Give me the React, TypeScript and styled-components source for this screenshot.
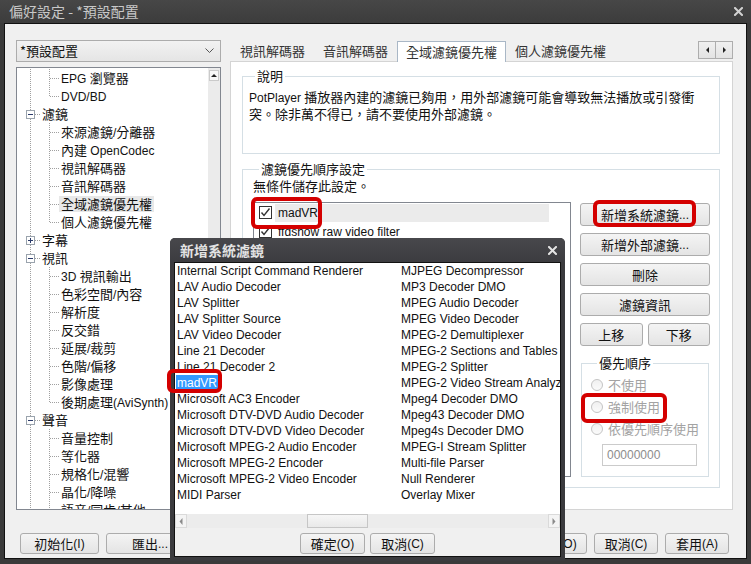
import React from 'react';
import styled, { createGlobalStyle, css } from 'styled-components';

const FONT = `"Noto Sans CJK TC", "Noto Sans", sans-serif`;
const LATIN = `"Liberation Sans", Arial, "Noto Sans CJK TC", sans-serif`;

const GlobalStyle = createGlobalStyle`
  * { box-sizing: border-box; }
  html, body { margin: 0; padding: 0; background: #3a3a3a; }
  body { font-family: ${FONT}; font-size: 13px; color: #000; }
`;

const Latin = styled.span`
  font-family: ${LATIN};
  font-size: 12px;
`;

const mix = (s: string) =>
  s
    .split(/([\x20-\x7e]+)/)
    .filter((p) => p.length > 0)
    .map((p, i) => (/^[\x20-\x7e]+$/.test(p) ? <Latin key={i}>{p}</Latin> : <React.Fragment key={i}>{p}</React.Fragment>));

const Window = styled.div`
  position: relative;
  width: 751px;
  height: 564px;
  display: flex;
  flex-direction: column;
  padding: 0 4px 5px;
  background: #3a3a3a;
  overflow: hidden;
`;

const TitleBar = styled.div`
  height: 23px;
  margin: 0 -4px;
  padding: 0 8px 0 9px;
  display: flex;
  align-items: center;
  justify-content: space-between;
  background: linear-gradient(#474747, #3c3c3c);
  color: #c8c8c8;
  font-size: 14px;
  line-height: 23px;
  white-space: nowrap;
`;

const Client = styled.div`
  flex: 1;
  min-height: 0;
  display: flex;
  flex-direction: column;
  background: #f0f0f0;
  border: 1px solid #111;
`;

const Main = styled.div`
  height: 486px;
  display: grid;
  grid-template-columns: 205px 503px;
  column-gap: 9px;
  padding: 16px 0 0 11px;
`;

const LeftCol = styled.div`
  display: flex;
  flex-direction: column;
  gap: 5px;
  min-height: 0;
`;

const Combo = styled.div`
  height: 22px;
  flex: none;
  display: flex;
  align-items: center;
  justify-content: space-between;
  padding: 0 6px 0 3px;
  border: 1px solid #acacac;
  background: linear-gradient(#f2f2f2, #e5e5e5);
  line-height: 20px;
  color: #111;
`;

const Tree = styled.div`
  flex: 1;
  min-height: 0;
  display: flex;
  border: 1px solid #828790;
  background: #fff;
`;

const TreeBody = styled.div`
  flex: 1;
  overflow: hidden;
  padding: 1px 0 0 4px;
`;

const TreeRow = styled.div`
  height: 18px;
  display: flex;
  align-items: center;
`;

const TreeLabel = styled.span<{ $sel?: boolean }>`
  padding: 0 2px;
  line-height: 16px;
  white-space: nowrap;
  color: #111;
  ${(p) => p.$sel && css`background: #e8e8e8;`}
`;

const GuideSvg = styled.svg`
  flex: none;
  display: block;
  shape-rendering: crispEdges;
`;

const VScroll = styled.div`
  width: 12px;
  flex: none;
  background: #ebebeb;
  display: flex;
  flex-direction: column;
  align-items: center;
  padding-top: 2px;
`;

const ScrollBtn = styled.div`
  width: 10px;
  height: 11px;
  border: 1px solid #cacaca;
  background: #f7f7f7;
  display: flex;
  align-items: center;
  justify-content: center;
`;

const RightCol = styled.div`
  display: flex;
  flex-direction: column;
  min-height: 0;
`;

const TabStrip = styled.div`
  height: 21px;
  flex: none;
  display: flex;
  align-items: stretch;
  padding-left: 1px;
`;

const Tab = styled.div<{ $active?: boolean }>`
  padding: 0 9px;
  display: flex;
  align-items: center;
  color: #333;
  line-height: 16px;
  white-space: nowrap;
  ${(p) =>
    p.$active &&
    css`
      position: relative;
      z-index: 1;
      margin-top: 1px;
      height: 21px;
      padding: 0 8px;
      background: #fff;
      border: 1px solid #a9b7c6;
      border-bottom: none;
    `}
`;

const TabArrows = styled.div`
  margin-left: auto;
  margin-top: 1px;
  height: 18px;
  display: flex;
`;

const ArrowBtn = styled.div`
  width: 18px;
  height: 18px;
  border: 1px solid #adadad;
  background: linear-gradient(#f0f0f0, #e3e3e3);
  display: flex;
  align-items: center;
  justify-content: center;
  & + & {
    margin-left: -1px;
  }
`;

const Panel = styled.div`
  flex: 1;
  min-height: 0;
  border: 1px solid #d4d4d4;
  background: #fff;
  padding: 6px 12px 0 11px;
  display: flex;
  flex-direction: column;
  gap: 7px;
`;

const Group = styled.fieldset<{ $h: number }>`
  margin: 0;
  padding: 0;
  min-width: 0;
  height: ${(p) => p.$h}px;
  border: 1px solid #d5dfe5;
`;

const Legend = styled.legend`
  margin-left: 6px;
  padding: 0 2px;
  line-height: 16px;
  font-size: 13px;
  color: #111;
`;

const DescGroup = styled(Group)`
  padding: 5px 6px 0;
`;

const DescText = styled.div`
  line-height: 15px;
  color: #111;
  white-space: nowrap;
`;

const OrderGroup = styled(Group)`
  padding: 1px 0 0 10px;
`;

const Note = styled.div`
  line-height: 16px;
  color: #111;
`;

const ContentRow = styled.div`
  margin-top: 8px;
  display: grid;
  grid-template-columns: 318px 130px;
  column-gap: 9px;
  align-items: start;
`;

const FilterList = styled.div`
  height: 275px;
  border: 1px solid #828790;
  background: #fff;
  padding: 1px 0 0 5px;
`;

const FilterRow = styled.div`
  position: relative;
  height: 19px;
  display: flex;
  align-items: flex-start;
`;

const CheckBox = styled.span`
  flex: none;
  margin-top: 2px;
  width: 13px;
  height: 13px;
  border: 1px solid #333;
  background: #fff;
  display: flex;
  align-items: center;
  justify-content: center;
`;

const FilterLabel = styled.span<{ $sel?: boolean }>`
  margin-left: 3px;
  width: 274px;
  height: 18px;
  padding-left: 3px;
  font-family: ${LATIN};
  font-size: 12px;
  line-height: 18px;
  white-space: nowrap;
  color: #111;
  ${(p) => p.$sel && css`background: #ebebeb;`}
`;

const ButtonCol = styled.div`
  margin-top: 1px;
  display: flex;
  flex-direction: column;
  gap: 7px;
`;

const PushButton = styled.div<{ $w?: number; $h?: number }>`
  position: relative;
  flex: none;
  height: ${(p) => p.$h ?? 23}px;
  ${(p) => p.$w && css`width: ${p.$w}px;`}
  display: flex;
  align-items: center;
  justify-content: center;
  border: 1px solid #acacac;
  border-radius: 3px;
  background: linear-gradient(#f4f4f4, #e4e4e4);
  line-height: 16px;
  color: #111;
  white-space: nowrap;
`;

const MoveRow = styled.div`
  display: grid;
  grid-template-columns: 1fr 1fr;
  column-gap: 5px;
`;

const PriorityGroup = styled(Group)`
  margin: 2px 1px 0;
  padding: 3px 0 0 9px;
`;

const RadioRow = styled.div`
  position: relative;
  height: 22px;
  display: flex;
  align-items: center;
  gap: 5px;
  color: #a3a3a3;
  line-height: 16px;
  white-space: nowrap;
`;

const RadioDot = styled.span`
  flex: none;
  width: 12px;
  height: 12px;
  border-radius: 50%;
  border: 1px solid #c4c4c4;
  background: linear-gradient(#f0f0f0, #fbfbfb);
`;

const Edit = styled.div`
  margin: 4px 0 0 11px;
  width: 95px;
  height: 22px;
  border: 1px solid #cbcbcb;
  background: #fff;
  color: #8c8c8c;
  padding-left: 4px;
  font-family: ${LATIN};
  font-size: 12px;
  line-height: 20px;
`;

const BottomBar = styled.div`
  height: 48px;
  display: flex;
  align-items: flex-end;
  gap: 7px;
  padding: 0 17px 4px 15px;
`;

const Spacer = styled.div`
  flex: 1;
`;

const Ring = styled.span<{ $l: number; $t: number; $w: number; $h: number }>`
  position: absolute;
  left: ${(p) => p.$l}px;
  top: ${(p) => p.$t}px;
  width: ${(p) => p.$w}px;
  height: ${(p) => p.$h}px;
  border: 4px solid #d40000;
  border-radius: 6px;
  pointer-events: none;
  z-index: 2;
`;

/* ---------- dialog ---------- */

const Dialog = styled.div`
  position: absolute;
  left: 170px;
  top: 238px;
  width: 395px;
  height: 323px;
  display: flex;
  flex-direction: column;
  padding: 0 4px 4px;
  background: #3b3b3e;
  border-radius: 5px 5px 0 0;
  z-index: 5;
`;

const DialogTitle = styled.div`
  height: 24px;
  margin: 0 -4px;
  padding: 0 8px 0 10px;
  display: flex;
  align-items: center;
  justify-content: space-between;
  border-radius: 5px 5px 0 0;
  background: linear-gradient(#48484c, #3c3c40);
  color: #e2e2e2;
  font-size: 14px;
  font-weight: 700;
  line-height: 24px;
`;

const DialogClient = styled.div`
  flex: 1;
  min-height: 0;
  display: flex;
  flex-direction: column;
  border: 1px solid #111;
  background: #f0f0f0;
`;

const PickList = styled.div`
  height: 251px;
  flex: none;
  background: #fff;
  display: grid;
  grid-auto-flow: column;
  grid-template-rows: repeat(15, 16px);
  grid-template-columns: 224px 159px;
  align-content: start;
  padding-left: 2px;
  font-family: ${LATIN};
  font-size: 12px;
`;

const PickItem = styled.div<{ $open?: boolean }>`
  line-height: 16px;
  white-space: nowrap;
  overflow: ${(p) => (p.$open ? 'visible' : 'hidden')};
  color: #111;
`;

const PickSel = styled.span`
  position: relative;
  display: inline-block;
  margin-left: -1px;
  padding: 0 1px;
  background: #3399ff;
  color: #fff;
`;

const HScroll = styled.div`
  height: 14px;
  flex: none;
  display: flex;
  align-items: stretch;
  background: #ececec;
`;

const HArrow = styled.div`
  width: 12px;
  display: flex;
  align-items: center;
  justify-content: center;
  background: #f4f4f4;
  border: 1px solid #dadada;
  &:last-child {
    margin-left: auto;
  }
`;

const HThumb = styled.div`
  margin-left: 120px;
  width: 61px;
  border: 1px solid #c6c6c6;
  background: linear-gradient(#f6f6f6, #e9e9e9);
`;

const DialogButtons = styled.div`
  flex: 1;
  display: flex;
  justify-content: center;
  gap: 5px;
  padding-top: 5px;
`;

/* ---------- drawings ---------- */

const CloseGlyph = ({ color }: { color: string }) => (
  <svg width="9" height="9" viewBox="0 0 9 9" style={{ display: 'block' }}>
    <path d="M1 1L8 8M8 1L1 8" stroke={color} strokeWidth="2" strokeLinecap="square" />
  </svg>
);

const Chevron = () => (
  <svg width="9" height="6" viewBox="0 0 9 6" style={{ display: 'block' }}>
    <polyline points="0.5,0.5 4.5,4.5 8.5,0.5" fill="none" stroke="#555" strokeWidth="1" />
  </svg>
);

const Tri = ({ dir }: { dir: 'up' | 'left' | 'right' }) => {
  const pts = dir === 'up' ? '0,4 3,1 6,4' : dir === 'left' ? '4,0 1,3 4,6' : '1,0 4,3 1,6';
  const size = dir === 'up' ? { w: 6, h: 5 } : { w: 5, h: 7 };
  return (
    <svg width={size.w} height={size.h} viewBox={`0 0 ${size.w} ${size.h}`} style={{ display: 'block' }}>
      <polygon points={pts} fill="#222" />
    </svg>
  );
};

const SmallTri = ({ dir }: { dir: 'left' | 'right' }) => (
  <svg width="4" height="7" viewBox="0 0 4 7" style={{ display: 'block' }}>
    <polygon points={dir === 'left' ? '3.5,0 0.5,3.5 3.5,7' : '0.5,0 3.5,3.5 0.5,7'} fill="#8a8a8a" />
  </svg>
);

const CheckMark = () => (
  <svg width="11" height="11" viewBox="0 0 11 11" style={{ display: 'block' }}>
    <polyline points="1.5,5.5 4,8.5 9.5,1.5" fill="none" stroke="#333" strokeWidth="1.4" />
  </svg>
);

type GuideProps = { vert: 'full' | 'top'; horiz?: boolean; box?: 'plus' | 'minus' };

const Guide = ({ vert, horiz, box }: GuideProps) => (
  <GuideSvg width="19" height="18" viewBox="0 0 19 18">
    <line x1="9.5" y1="0" x2="9.5" y2={vert === 'full' ? 18 : 10} stroke="#a0a0a0" strokeDasharray="1 1" />
    {horiz && <line x1={box ? 14 : 10} y1="9.5" x2="19" y2="9.5" stroke="#a0a0a0" strokeDasharray="1 1" />}
    {box && (
      <>
        <rect x="5.5" y="5.5" width="8" height="8" fill="#fff" stroke="#9aa3ad" />
        <line x1="7" y1="9.5" x2="12" y2="9.5" stroke="#2a3a6a" />
        {box === 'plus' && <line x1="9.5" y1="7" x2="9.5" y2="12" stroke="#2a3a6a" />}
      </>
    )}
  </GuideSvg>
);

/* ---------- data ---------- */

type TreeNode = { label: string; level: 1 | 2; box?: 'plus' | 'minus'; last?: boolean; selected?: boolean };

const treeRows: TreeNode[] = [
  { label: 'EPG 瀏覽器', level: 2 },
  { label: 'DVD/BD', level: 2, last: true },
  { label: '濾鏡', level: 1, box: 'minus' },
  { label: '來源濾鏡/分離器', level: 2 },
  { label: '內建 OpenCodec', level: 2 },
  { label: '視訊解碼器', level: 2 },
  { label: '音訊解碼器', level: 2 },
  { label: '全域濾鏡優先權', level: 2, selected: true },
  { label: '個人濾鏡優先權', level: 2, last: true },
  { label: '字幕', level: 1, box: 'plus' },
  { label: '視訊', level: 1, box: 'minus' },
  { label: '3D 視訊輸出', level: 2 },
  { label: '色彩空間/內容', level: 2 },
  { label: '解析度', level: 2 },
  { label: '反交錯', level: 2 },
  { label: '延展/裁剪', level: 2 },
  { label: '色階/偏移', level: 2 },
  { label: '影像處理', level: 2 },
  { label: '後期處理(AviSynth)', level: 2, last: true },
  { label: '聲音', level: 1, box: 'minus' },
  { label: '音量控制', level: 2 },
  { label: '等化器', level: 2 },
  { label: '規格化/混響', level: 2 },
  { label: '晶化/降噪', level: 2 },
  { label: '語音/同步/其他', level: 2 },
];

const pickCol1 = [
  'Internal Script Command Renderer',
  'LAV Audio Decoder',
  'LAV Splitter',
  'LAV Splitter Source',
  'LAV Video Decoder',
  'Line 21 Decoder',
  'Line 21 Decoder 2',
  'madVR',
  'Microsoft AC3 Encoder',
  'Microsoft DTV-DVD Audio Decoder',
  'Microsoft DTV-DVD Video Decoder',
  'Microsoft MPEG-2 Audio Encoder',
  'Microsoft MPEG-2 Encoder',
  'Microsoft MPEG-2 Video Encoder',
  'MIDI Parser',
];

const pickCol2 = [
  'MJPEG Decompressor',
  'MP3 Decoder DMO',
  'MPEG Audio Decoder',
  'MPEG Video Decoder',
  'MPEG-2 Demultiplexer',
  'MPEG-2 Sections and Tables',
  'MPEG-2 Splitter',
  'MPEG-2 Video Stream Analyzer',
  'Mpeg4 Decoder DMO',
  'Mpeg43 Decoder DMO',
  'Mpeg4s Decoder DMO',
  'MPEG-I Stream Splitter',
  'Multi-file Parser',
  'Null Renderer',
  'Overlay Mixer',
];

export default function App() {
  return (
    <>
      <GlobalStyle />
      <Window>
        <TitleBar>
          <span>偏好設定 - *預設配置</span>
          <CloseGlyph color="#d2d2d2" />
        </TitleBar>
        <Client>
          <Main>
            <LeftCol>
              <Combo>
                <span>*預設配置</span>
                <Chevron />
              </Combo>
              <Tree>
                <TreeBody>
                  {treeRows.map((n, i) => (
                    <TreeRow key={i}>
                      {n.level === 1 ? (
                        <Guide vert="full" horiz box={n.box} />
                      ) : (
                        <>
                          <Guide vert="full" />
                          <Guide vert={n.last ? 'top' : 'full'} horiz />
                        </>
                      )}
                      <TreeLabel $sel={n.selected}>{mix(n.label)}</TreeLabel>
                    </TreeRow>
                  ))}
                </TreeBody>
                <VScroll>
                  <ScrollBtn>
                    <Tri dir="up" />
                  </ScrollBtn>
                </VScroll>
              </Tree>
            </LeftCol>
            <RightCol>
              <TabStrip>
                <Tab>視訊解碼器</Tab>
                <Tab>音訊解碼器</Tab>
                <Tab $active>全域濾鏡優先權</Tab>
                <Tab>個人濾鏡優先權</Tab>
                <TabArrows>
                  <ArrowBtn>
                    <Tri dir="left" />
                  </ArrowBtn>
                  <ArrowBtn>
                    <Tri dir="right" />
                  </ArrowBtn>
                </TabArrows>
              </TabStrip>
              <Panel>
                <DescGroup $h={86}>
                  <Legend>說明</Legend>
                  <DescText>
                    {mix('PotPlayer 播放器內建的濾鏡已夠用，用外部濾鏡可能會導致無法播放或引發衝')}
                    <br />
                    突。除非萬不得已，請不要使用外部濾鏡。
                  </DescText>
                </DescGroup>
                <OrderGroup $h={327}>
                  <Legend>濾鏡優先順序設定</Legend>
                  <Note>無條件儲存此設定。</Note>
                  <ContentRow>
                    <FilterList>
                      <FilterRow>
                        <CheckBox>
                          <CheckMark />
                        </CheckBox>
                        <FilterLabel $sel>madVR</FilterLabel>
                        <Ring $l={-8} $t={-7} $w={71} $h={32} />
                      </FilterRow>
                      <FilterRow>
                        <CheckBox>
                          <CheckMark />
                        </CheckBox>
                        <FilterLabel>ffdshow raw video filter</FilterLabel>
                      </FilterRow>
                      <FilterRow>
                        <CheckBox>
                          <CheckMark />
                        </CheckBox>
                        <FilterLabel>LAV Video Decoder</FilterLabel>
                      </FilterRow>
                    </FilterList>
                    <ButtonCol>
                      <PushButton>
                        {mix('新增系統濾鏡...')}
                        <Ring $l={12} $t={-4} $w={103} $h={27} />
                      </PushButton>
                      <PushButton>{mix('新增外部濾鏡...')}</PushButton>
                      <PushButton>刪除</PushButton>
                      <PushButton>濾鏡資訊</PushButton>
                      <MoveRow>
                        <PushButton>上移</PushButton>
                        <PushButton>下移</PushButton>
                      </MoveRow>
                      <PriorityGroup $h={122}>
                        <Legend>優先順序</Legend>
                        <RadioRow>
                          <RadioDot />
                          不使用
                        </RadioRow>
                        <RadioRow>
                          <RadioDot />
                          強制使用
                          <Ring $l={-10} $t={-3} $w={86} $h={30} />
                        </RadioRow>
                        <RadioRow>
                          <RadioDot />
                          依優先順序使用
                        </RadioRow>
                        <Edit>00000000</Edit>
                      </PriorityGroup>
                    </ButtonCol>
                  </ContentRow>
                </OrderGroup>
              </Panel>
            </RightCol>
          </Main>
          <BottomBar>
            <PushButton $w={79} $h={21}>{mix('初始化(I)')}</PushButton>
            <PushButton $w={88} $h={21}>{mix('匯出...')}</PushButton>
            <Spacer />
            <PushButton $w={64} $h={21}>{mix('確定(O)')}</PushButton>
            <PushButton $w={64} $h={21}>{mix('取消(C)')}</PushButton>
            <PushButton $w={64} $h={21}>{mix('套用(A)')}</PushButton>
          </BottomBar>
        </Client>

        <Dialog>
          <DialogTitle>
            <span>新增系統濾鏡</span>
            <CloseGlyph color="#e4e4e4" />
          </DialogTitle>
          <DialogClient>
            <PickList>
              {pickCol1.map((t) =>
                t === 'madVR' ? (
                  <PickItem key={t} $open>
                    <PickSel>
                      {t}
                      <Ring $l={-9} $t={-6} $w={55} $h={24} />
                    </PickSel>
                  </PickItem>
                ) : (
                  <PickItem key={t}>{t}</PickItem>
                )
              )}
              {pickCol2.map((t) => (
                <PickItem key={t}>{t}</PickItem>
              ))}
            </PickList>
            <HScroll>
              <HArrow>
                <SmallTri dir="left" />
              </HArrow>
              <HThumb />
              <HArrow>
                <SmallTri dir="right" />
              </HArrow>
            </HScroll>
            <DialogButtons>
              <PushButton $w={65} $h={21}>{mix('確定(O)')}</PushButton>
              <PushButton $w={65} $h={21}>{mix('取消(C)')}</PushButton>
            </DialogButtons>
          </DialogClient>
        </Dialog>
      </Window>
    </>
  );
}
